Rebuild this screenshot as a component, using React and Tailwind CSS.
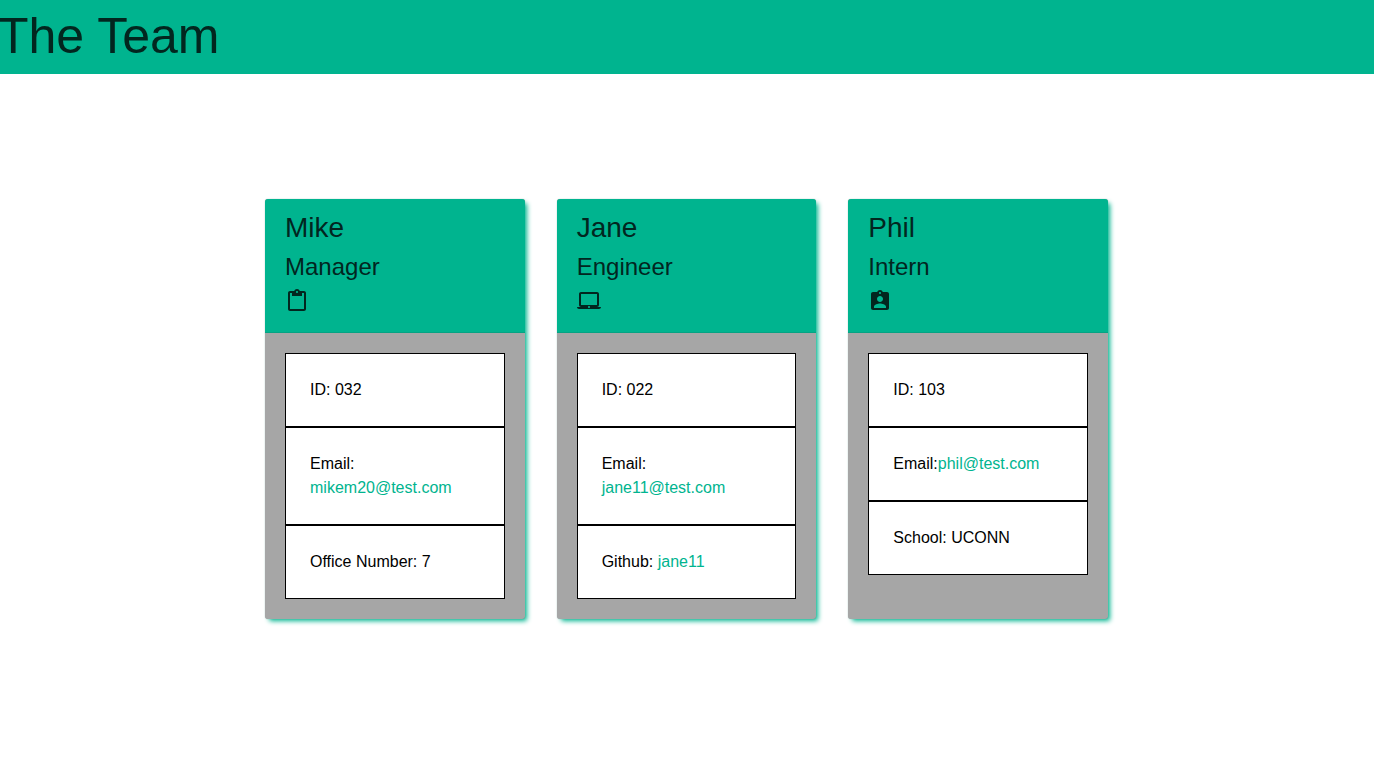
import { MdAssignmentInd, MdLaptopMac, MdOutlineContentPaste } from "react-icons/md";

const team = [
  {
    name: "Mike",
    role: "Manager",
    Icon: MdOutlineContentPaste,
    id: "032",
    email: "mikem20@test.com",
    wrap: true,
    last: <>Office Number: 7</>,
  },
  {
    name: "Jane",
    role: "Engineer",
    Icon: MdLaptopMac,
    id: "022",
    email: "jane11@test.com",
    wrap: true,
    last: <>Github: <a className="text-[#00b48f]" href="#">jane11</a></>,
  },
  {
    name: "Phil",
    role: "Intern",
    Icon: MdAssignmentInd,
    id: "103",
    email: "phil@test.com",
    wrap: false,
    last: <>School: UCONN</>,
  },
];

function Card({ member }) {
  const { Icon } = member;
  return (
    <div className="w-[259.67px] rounded-[3px] bg-[#a6a6a6] shadow-[3px_3px_5px_-1px_#00b48f,0_0_1px_rgba(0,0,0,0.35)]">
      <div className="h-[134px] rounded-t-[3px] border-b border-[#05a383] bg-[#00b48f] px-5 pt-[11px] text-[#02261f]">
        <h2 className="text-[28px] leading-[36px]">{member.name}</h2>
        <h3 className="mt-[1px] text-[24px] leading-[40px]">{member.role}</h3>
        <Icon className="mt-[2px] text-[24px]" />
      </div>
      <div className="h-[286px] px-5 pt-5">
        <ul className="border border-black bg-white text-[16px] leading-[24px] text-black">
          <li className="border-b-2 border-black px-6 pt-6 pb-[24px]">ID: {member.id}</li>
          <li className="border-b-2 border-black px-6 pt-6 pb-[24px]">
            {member.wrap ? "Email: " : "Email:"}
            <a className="text-[#00b48f]" href="#">{member.email}</a>
          </li>
          <li className="px-6 pt-6 pb-[24px]">{member.last}</li>
        </ul>
      </div>
    </div>
  );
}

export default function App() {
  return (
    <div className="min-h-[773px] bg-white font-['Liberation_Sans',Arial,sans-serif]">
      <header className="h-[74px] bg-[#00b48f]">
        <h1 className="ml-[-2px] text-[50px] leading-[72px] text-[#02261f]">The Team</h1>
      </header>
      <main className="flex justify-center gap-[32px] pt-[125px] pr-[1px]">
        {team.map((member) => (
          <Card key={member.name} member={member} />
        ))}
      </main>
    </div>
  );
}
